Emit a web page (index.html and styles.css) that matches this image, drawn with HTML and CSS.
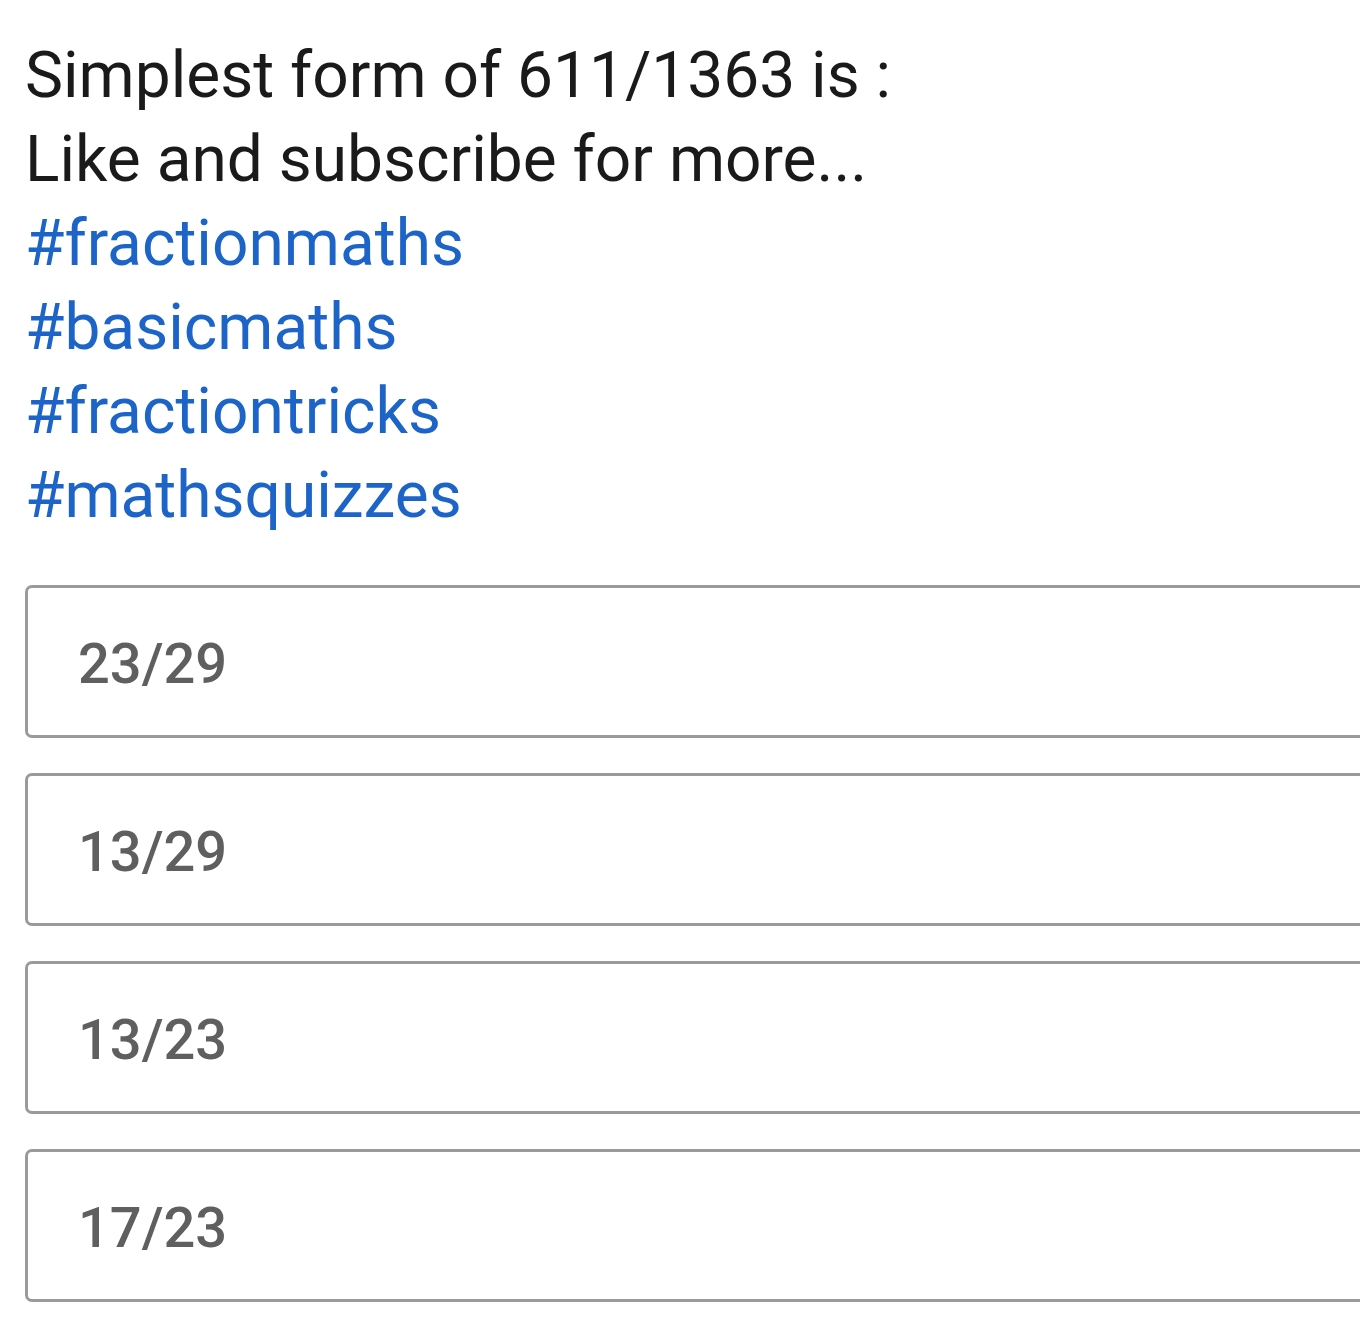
FILE: index.html
```html
<!DOCTYPE html>
<html>
<head>
<meta charset="utf-8">
<link rel="stylesheet" href="styles.css">
</head>
<body>
<div class="page">
  <div class="desc">
    <div class="line">Simplest form of 611/1363 is :</div>
    <div class="line">Like and subscribe for more...</div>
    <div class="line tag">#fractionmaths</div>
    <div class="line tag">#basicmaths</div>
    <div class="line tag">#fractiontricks</div>
    <div class="line tag">#mathsquizzes</div>
  </div>
  <div class="options">
    <div class="option">23/29</div>
    <div class="option">13/29</div>
    <div class="option">13/23</div>
    <div class="option">17/23</div>
  </div>
</div>
</body>
</html>
```
FILE: styles.css
```css
html, body {
  margin: 0;
  padding: 0;
  background: #ffffff;
  overflow: hidden;
}
body {
  font-family: Roboto, "Noto Sans", sans-serif;
}
.page {
  padding: 34px 0 0 25px;
}
.desc {
  font-size: 64px;
  line-height: 84px;
  color: #1a1a1a;
}
.tag {
  color: #1c64c8;
}
.options {
  margin-top: 47px;
  display: flex;
  flex-direction: column;
  gap: 35px;
  width: 1400px;
}
.option {
  box-sizing: border-box;
  height: 153px;
  border: 3px solid #9a9a9a;
  border-radius: 7px;
  display: flex;
  align-items: center;
  padding: 5px 0 0 50px;
  font-size: 56px;
  font-weight: 500;
  color: #5f5f5f;
}
```
